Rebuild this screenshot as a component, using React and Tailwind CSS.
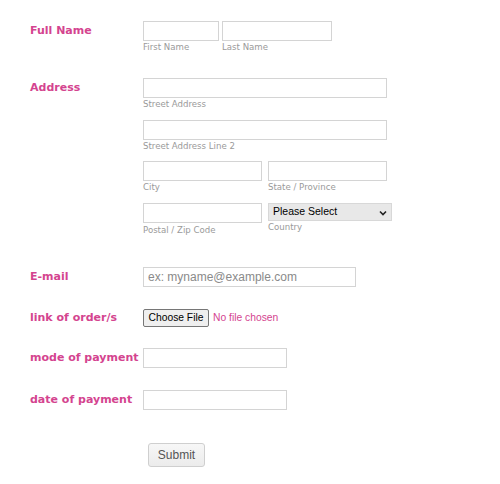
const labelCls =
  "w-[143px] shrink-0 pl-[30px] whitespace-nowrap flex items-center text-[11px] font-bold text-[#d4448f] font-['DejaVu_Sans',Verdana,sans-serif]";
const inputCls =
  "h-[20px] border border-[#d4d4d4] bg-white outline-none px-1 text-[12px] font-['Liberation_Sans',Arial,sans-serif]";
const subCls =
  "mt-[1px] leading-[11px] text-[8.6px] text-[#9a9a9a] font-['DejaVu_Sans',Verdana,sans-serif]";

function Field({ width, sub, className = "" }) {
  return (
    <div className={"flex flex-col " + className}>
      <input type="text" className={inputCls} style={{ width }} />
      <span className={subCls}>{sub}</span>
    </div>
  );
}

export default function App() {
  return (
    <div className="w-[500px] h-[484px] bg-white pt-[21px] flex flex-col">
      {/* Full Name */}
      <div className="flex items-start">
        <div className={labelCls + " h-[20px]"}>Full Name</div>
        <div className="flex gap-[3px]">
          <Field width={76} sub="First Name" />
          <Field width={110} sub="Last Name" />
        </div>
      </div>

      {/* Address */}
      <div className="flex items-start mt-[25px]">
        <div className={labelCls + " h-[20px]"}>Address</div>
        <div className="flex flex-col">
          <Field width={244} sub="Street Address" />
          <Field width={244} sub="Street Address Line 2" className="mt-[10px]" />
          <div className="flex gap-[6px] mt-[9px]">
            <Field width={119} sub="City" />
            <Field width={119} sub="State / Province" />
          </div>
          <div className="flex gap-[6px] mt-[10px]">
            <div className="flex flex-col">
              <input type="text" className={inputCls + " h-[19px]"} style={{ width: 119 }} />
              <span className={subCls + " mt-[2px]"}>Postal / Zip Code</span>
            </div>
            <div className="flex flex-col">
              <div className="relative w-[124px] h-[18px] bg-[#e8e8e8] border border-[#d8d8d8] flex items-center pl-[4px] text-[10.5px] text-black font-['Liberation_Sans',Arial,sans-serif]">
                Please Select
                <svg
                  className="absolute right-[4px] top-[6px]"
                  width="8"
                  height="6"
                  viewBox="0 0 8 6"
                  fill="none"
                  stroke="#222"
                  strokeWidth="1.6"
                >
                  <path d="M1 1.5 L4 4.5 L7 1.5" />
                </svg>
              </div>
              <span className={subCls}>Country</span>
            </div>
          </div>
        </div>
      </div>

      {/* E-mail */}
      <div className="flex items-start mt-[31px]">
        <div className={labelCls + " h-[20px]"}>E-mail</div>
        <input
          type="text"
          placeholder="ex: myname@example.com"
          className={inputCls + " w-[213px] placeholder:text-[#8a8a8a]"}
        />
      </div>

      {/* link of order/s */}
      <div className="flex items-start mt-[22px]">
        <div className={labelCls + " h-[18px]"}>link of order/s</div>
        <div className="flex items-center h-[18px] font-['Liberation_Sans',Arial,sans-serif] text-[10.3px]">
          <span className="h-[18px] w-[66px] flex items-center justify-center bg-[#efefef] border border-[#767676] rounded-[2px] text-black">
            Choose File
          </span>
          <span className="ml-[4px] text-[#d4448f]">No file chosen</span>
        </div>
      </div>

      {/* mode of payment */}
      <div className="flex items-start mt-[21px]">
        <div className={labelCls + " h-[20px]"}>mode of payment</div>
        <input type="text" className={inputCls + " w-[144px]"} />
      </div>

      {/* date of payment */}
      <div className="flex items-start mt-[22px]">
        <div className={labelCls + " h-[20px]"}>date of payment</div>
        <input type="text" className={inputCls + " w-[144px]"} />
      </div>

      {/* Submit */}
      <div className="mt-[31px] pl-[148px]">
        <button
          type="button"
          className="w-[57px] h-[24px] border border-[#cfcfcf] rounded-[3px] bg-gradient-to-b from-[#f7f7f7] to-[#ececec] text-[12px] text-[#555] font-['Liberation_Sans',Arial,sans-serif]"
        >
          Submit
        </button>
      </div>
    </div>
  );
}
